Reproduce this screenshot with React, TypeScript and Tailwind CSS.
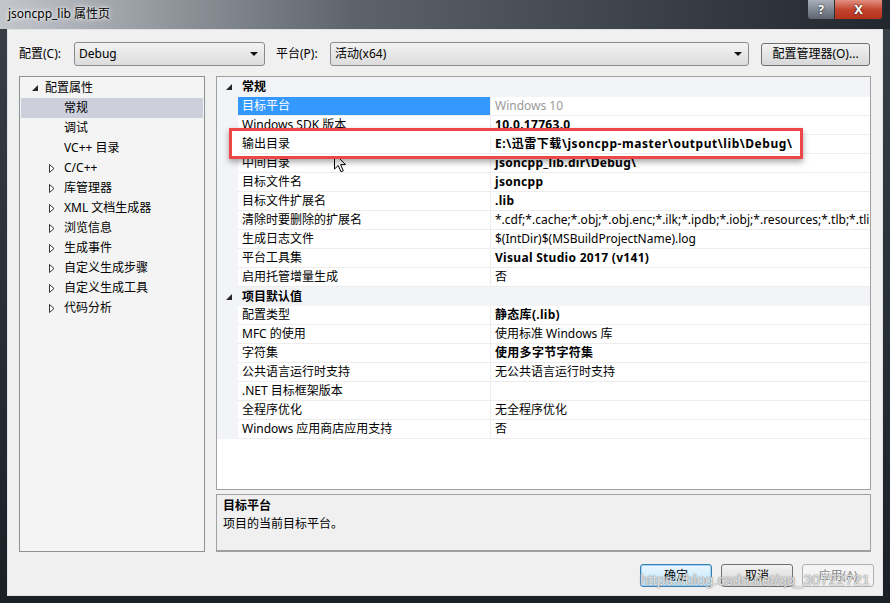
import React from "react";

type Row = { name: string; value: string; kind?: "b" | "dim" };

const general: Row[] = [
  { name: "目标平台", value: "Windows 10", kind: "dim" },
  { name: "Windows SDK 版本", value: "10.0.17763.0", kind: "b" },
  { name: "输出目录", value: "E:\\迅雷下载\\jsoncpp-master\\output\\lib\\Debug\\", kind: "b" },
  { name: "中间目录", value: "jsoncpp_lib.dir\\Debug\\", kind: "b" },
  { name: "目标文件名", value: "jsoncpp", kind: "b" },
  { name: "目标文件扩展名", value: ".lib", kind: "b" },
  {
    name: "清除时要删除的扩展名",
    value:
      "*.cdf;*.cache;*.obj;*.obj.enc;*.ilk;*.ipdb;*.iobj;*.resources;*.tlb;*.tli;*.tlh;*.tmp;*.rsp;*.pgc;*.pgd;*.meta;*.tlog",
  },
  { name: "生成日志文件", value: "$(IntDir)$(MSBuildProjectName).log" },
  { name: "平台工具集", value: "Visual Studio 2017 (v141)", kind: "b" },
  { name: "启用托管增量生成", value: "否" },
];

const defaults: Row[] = [
  { name: "配置类型", value: "静态库(.lib)", kind: "b" },
  { name: "MFC 的使用", value: "使用标准 Windows 库" },
  { name: "字符集", value: "使用多字节字符集", kind: "b" },
  { name: "公共语言运行时支持", value: "无公共语言运行时支持" },
  { name: ".NET 目标框架版本", value: "" },
  { name: "全程序优化", value: "无全程序优化" },
  { name: "Windows 应用商店应用支持", value: "否" },
];

const treeItems = [
  { label: "调试", arrow: false },
  { label: "VC++ 目录", arrow: false },
  { label: "C/C++", arrow: true },
  { label: "库管理器", arrow: true },
  { label: "XML 文档生成器", arrow: true },
  { label: "浏览信息", arrow: true },
  { label: "生成事件", arrow: true },
  { label: "自定义生成步骤", arrow: true },
  { label: "自定义生成工具", arrow: true },
  { label: "代码分析", arrow: true },
];

const Expanded = () => (
  <svg width="6" height="6" viewBox="0 0 6 6">
    <polygon points="6,0 6,6 0,6" fill="#262626" />
  </svg>
);

const Collapsed = () => (
  <svg width="6" height="9" viewBox="0 0 6 9">
    <polygon points="0.5,0.5 5,4.5 0.5,8.5" fill="#fff" stroke="#333" strokeWidth="1" />
  </svg>
);

const DropArrow = () => (
  <svg width="8" height="4" viewBox="0 0 8 4">
    <polygon points="0,0 8,0 4,4" fill="#111" />
  </svg>
);

// hidden: the row sits under the red annotation box, which repeats it
const PropRow = ({ row, selected, hidden }: { row: Row; selected?: boolean; hidden?: boolean }) => (
  <div className="flex h-[19px]">
    <div className="w-[21px] shrink-0 bg-[#f2f4f8]" />
    <div
      className={
        "w-[252px] shrink-0 pl-[4px] leading-[18px] whitespace-nowrap overflow-hidden border-b border-[#ededed] " +
        (selected ? "bg-[#3399ff] text-white" : "")
      }
    >
      {!hidden && row.name}
    </div>
    <div
      className={
        "flex-1 min-w-0 pl-[4px] leading-[18px] whitespace-nowrap overflow-hidden border-b border-l border-[#ededed] " +
        (row.kind === "b" ? "font-bold tracking-[0.3px]" : "") +
        (row.kind === "dim" ? " text-[#9a9a9a]" : "")
      }
    >
      {!hidden && row.value}
    </div>
  </div>
);

const Category = ({ label, tall }: { label: string; tall?: boolean }) => (
  <div className={"flex items-center bg-[#f2f4f8] " + (tall ? "h-[20px]" : "h-[19px]")}>
    <div className="w-[21px] flex justify-center items-center pl-[2px]">
      <Expanded />
    </div>
    <span className="pl-[4px] font-bold">{label}</span>
  </div>
);

export default function App() {
  return (
    <div className="relative w-[890px] h-[603px] overflow-hidden flex flex-col bg-gradient-to-b from-[#3a4048] to-[#1b2027] text-[12px] text-black font-['Noto_Sans','Noto_Sans_CJK_SC',sans-serif]">
      {/* title bar */}
      <div className="h-[29px] flex items-start bg-gradient-to-r from-[#c3c7cc] via-[#5d636b] via-40% to-[#22272e]">
        <span className="pl-[8px] pt-[5px] text-[12px] text-black [text-shadow:0_0_6px_#fff,0_0_3px_#fff]">
          jsoncpp_lib 属性页
        </span>
        <div className="ml-auto mr-[7px] flex">
          <div className="w-[28px] h-[20px] flex items-center justify-center rounded-bl-[4px] border border-t-0 border-[#2a2f36] bg-gradient-to-b from-[#a9b0b9] to-[#5c646f] text-white font-bold text-[12px] [text-shadow:0_0_2px_#000]">
            ?
          </div>
          <div className="w-[48px] h-[20px] flex items-center justify-center rounded-br-[4px] border border-t-0 border-l-0 border-[#2a2f36] bg-gradient-to-b from-[#e08f7f] via-[#c4452f] to-[#b5301b] text-white font-bold text-[13px] [text-shadow:0_0_2px_#000]">
            X
          </div>
        </div>
      </div>

      {/* client area */}
      <div className="flex-1 min-w-0 mx-[7px] mb-[7px] border border-[#dfe3e8] bg-[#f0f0f0] flex flex-col relative">
        {/* top row */}
        <div className="mt-[12px] h-[24px] flex items-center pl-[11px]">
          <span className="w-[55px]">配置(C):</span>
          <div className="w-[191px] h-[24px] flex items-center justify-between pl-[4px] pr-[6px] rounded-[3px] border border-[#8a8a8a] bg-gradient-to-b from-[#f3f3f3] to-[#dcdcdc]">
            <span>Debug</span>
            <DropArrow />
          </div>
          <span className="ml-[11px] w-[54px]">平台(P):</span>
          <div className="w-[419px] h-[24px] flex items-center justify-between pl-[4px] pr-[6px] rounded-[3px] border border-[#8a8a8a] bg-gradient-to-b from-[#f3f3f3] to-[#dcdcdc]">
            <span>活动(x64)</span>
            <DropArrow />
          </div>
          <div className="ml-[12px] w-[109px] h-[23px] flex items-center justify-center rounded-[3px] border border-[#707070] bg-gradient-to-b from-[#f2f2f2] to-[#d8d8d8]">
            配置管理器(O)...
          </div>
        </div>

        {/* main */}
        <div className="mt-[10px] h-[476px] flex pl-[11px] pr-[11px] gap-[11px]">
          {/* tree */}
          <div className="w-[186px] shrink-0 border border-[#8e9297] bg-[#f4f4f4] p-px">
            <div className="h-[20px] flex items-center">
              <div className="w-[24px] flex justify-end pr-[7px]">
                <Expanded />
              </div>
              <span>配置属性</span>
            </div>
            <div className="h-[20px] flex items-center bg-[#cdd0dc] pl-[43px]">常规</div>
            {treeItems.map((t) => (
              <div key={t.label} className="h-[20px] flex items-center">
                <div className="w-[43px] flex justify-end pr-[9px]">{t.arrow && <Collapsed />}</div>
                <span>{t.label}</span>
              </div>
            ))}
          </div>

          {/* right column */}
          <div className="flex-1 min-w-0 flex flex-col gap-[4px]">
            <div className="relative h-[414px] border border-[#a0a0a0] bg-white overflow-hidden">
              <Category label="常规" tall />
              {general.map((r, i) => (
                <PropRow key={r.name} row={r} selected={i === 0} hidden={i === 2} />
              ))}
              <Category label="项目默认值" />
              {defaults.map((r) => (
                <PropRow key={r.name} row={r} />
              ))}

              {/* mouse cursor */}
              <svg
                className="absolute left-[117px] top-[76px]"
                width="13"
                height="20"
                viewBox="0 0 13 20"
              >
                <path
                  d="M0.5,0.5 L0.5,16 L4.2,12.5 L7,18.8 L9.3,17.8 L6.6,11.6 L11.5,11.6 Z"
                  fill="#fff"
                  stroke="#000"
                  strokeWidth="1"
                />
              </svg>

              {/* red highlight box */}
              <div className="absolute left-[12px] top-[51px] w-[574px] h-[31px] border-[3px] border-[#ee4646] bg-white shadow-[0_3px_6px_rgba(0,0,0,0.35)]">
                <div className="mt-[4px] flex h-[19px]">
                  <div className="w-[6px] shrink-0" />
                  <div className="w-[252px] shrink-0 pl-[4px] leading-[18px] border-b border-[#ededed]">
                    输出目录
                  </div>
                  <div className="flex-1 pl-[4px] leading-[18px] font-bold tracking-[0.55px] whitespace-nowrap border-b border-l border-[#ededed]">
                    E:\迅雷下载\jsoncpp-master\output\lib\Debug\
                  </div>
                </div>
              </div>
            </div>

            {/* description */}
            <div className="h-[58px] border border-b-2 border-[#a0a0a0] bg-[#f0f0f0] pl-[6px] pt-[2px]">
              <div className="font-bold leading-[18px]">目标平台</div>
              <div className="leading-[18px]">项目的当前目标平台。</div>
            </div>
          </div>
        </div>

        {/* buttons */}
        <div className="mt-[12px] h-[23px] flex justify-end gap-[9px] pr-[8px]">
          <div className="w-[72px] h-[23px] flex items-center justify-center rounded-[3px] border border-[#3c7fb1] bg-gradient-to-b from-[#eaf6fd] to-[#bee6fd] shadow-[inset_0_0_0_1px_#9ed4f5]">
            确定
          </div>
          <div className="w-[72px] h-[23px] flex items-center justify-center rounded-[3px] border border-[#707070] bg-gradient-to-b from-[#f2f2f2] to-[#d6d6d6]">
            取消
          </div>
          <div className="w-[72px] h-[23px] flex items-center justify-center rounded-[3px] border border-[#adb2b5] bg-[#f4f4f4] text-[#8b8b8b]">
            应用(A)
          </div>
        </div>

        {/* watermark */}
        <span className="absolute left-[632px] top-[539px] text-[15px] text-white/75 font-['Liberation_Sans',sans-serif] [text-shadow:0_0_1px_#777,0_0_2px_#999] whitespace-nowrap">
          https://blog.csdn.net/qq_30722721
        </span>
      </div>
    </div>
  );
}
